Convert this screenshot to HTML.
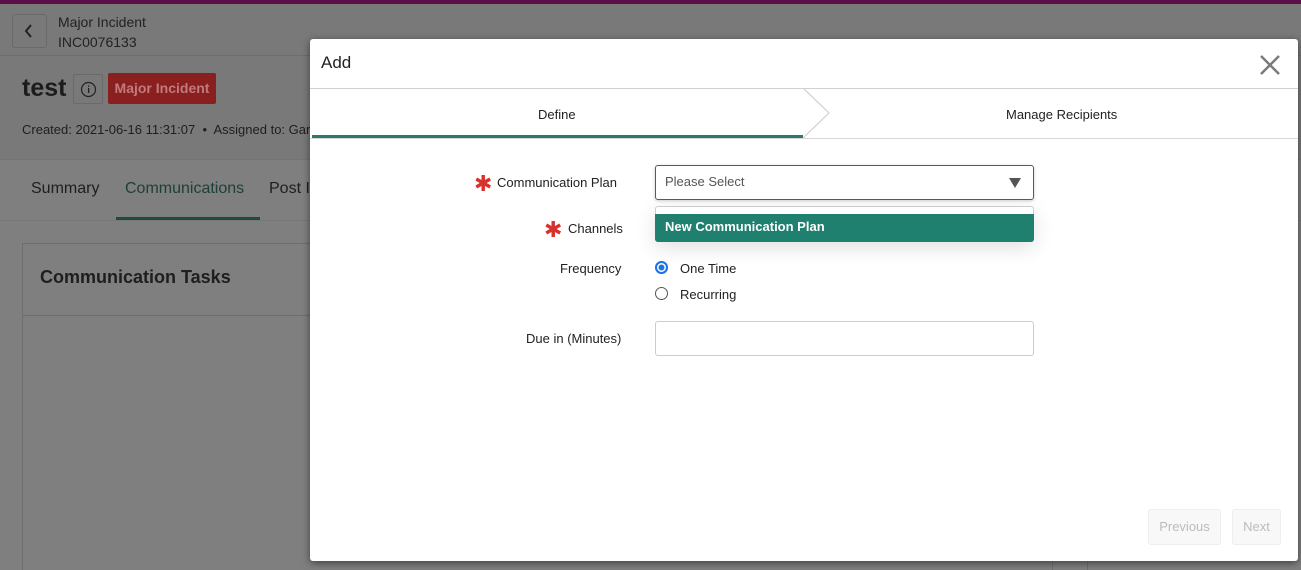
<!DOCTYPE html>
<html style="width:1301px;height:570px;overflow:hidden"><head><meta charset="utf-8"><style>
*{box-sizing:border-box;margin:0;padding:0}
body{width:1301px;height:570px;overflow:hidden;background:#7f7f7f;font-family:"Liberation Sans",sans-serif;position:relative;color:#1a1a1a}
.a{position:absolute}
.ast{font-size:22px;color:#d9312b;font-family:"DejaVu Sans",sans-serif;line-height:22px}
</style></head><body>
<div class="a" style="left:0;top:0;width:1301px;height:4px;background:#5a0f4a"></div>
<div class="a" style="left:0;top:4px;width:1301px;height:155px;background:#797979"></div>
<div class="a" style="left:0;top:55px;width:1301px;height:1px;background:#6e6e6e"></div>
<div class="a" style="left:0;top:159px;width:1301px;height:1px;background:#747474"></div>
<div class="a" style="left:12px;top:14px;width:35px;height:34px;border:1px solid #6a6a6a;border-radius:3px"></div>
<svg class="a" style="left:22px;top:22px" width="14" height="18"><path d="M9 3 L4 9 L9 15" fill="none" stroke="#222" stroke-width="2"/></svg>
<div class="a" style="left:58px;top:12px;font-size:14px;color:#222;line-height:20px">Major Incident<br>INC0076133</div>
<div class="a" style="left:22px;top:74px;font-size:25px;font-weight:bold;color:#1c1c1c">test</div>
<div class="a" style="left:73px;top:74px;width:30px;height:30px;border:1px solid #6a6a6a;border-radius:2px"></div>
<svg class="a" style="left:80px;top:81px" width="17" height="17"><circle cx="8.5" cy="8.5" r="7" fill="none" stroke="#222" stroke-width="1.2"/><rect x="8" y="7" width="1.3" height="5" fill="#222"/><rect x="8" y="4.5" width="1.3" height="1.3" fill="#222"/></svg>
<div class="a" style="left:108px;top:73px;width:108px;height:31px;background:#8a1f1f;border-radius:2px;color:#c27a7a;font-weight:bold;font-size:14px;line-height:31px;text-align:center">Major Incident</div>
<div class="a" style="left:22px;top:122px;font-size:13px;color:#1e1e1e;white-space:nowrap">Created: 2021-06-16 11:31:07 &nbsp;•&nbsp; Assigned to: Gar</div>
<div class="a" style="left:31px;top:180px;font-size:16px;color:#1e1e1e">Summary</div>
<div class="a" style="left:125px;top:180px;font-size:16px;color:#1e3f38">Communications</div>
<div class="a" style="left:269px;top:180px;font-size:16px;color:#1e1e1e">Post I</div>
<div class="a" style="left:116px;top:217px;width:144px;height:4px;background:#1f4a42"></div>
<div class="a" style="left:0;top:220px;width:1301px;height:1px;background:#777"></div>
<div class="a" style="left:22px;top:243px;width:1031px;height:327px;border:1px solid #6e6e6e;border-bottom:none"></div>
<div class="a" style="left:22px;top:315px;width:1031px;height:1px;background:#6e6e6e"></div>
<div class="a" style="left:1087px;top:243px;width:1px;height:327px;background:#6e6e6e"></div>
<div class="a" style="left:40px;top:267px;font-size:18px;font-weight:bold;color:#1e1e1e">Communication Tasks</div>

<div class="a" style="left:310px;top:39px;width:988px;height:522px;background:#fff;border-radius:3px;box-shadow:0 2px 8px rgba(0,0,0,.5)">
 <div class="a" style="left:11px;top:14px;font-size:17px;color:#222">Add</div>
 <svg class="a" style="left:949px;top:15px" width="22" height="22"><path d="M2 2 L20 20 M20 2 L2 20" stroke="#7a7a7a" stroke-width="2.5"/></svg>
 <div class="a" style="left:0;top:49px;width:988px;height:1px;background:#d0d0d0"></div>
 <div class="a" style="left:0;top:99px;width:988px;height:1px;background:#d6d6d6"></div>
 <div class="a" style="left:2px;top:96px;width:492px;height:3px;background:#2a7a6c"></div>
 <svg class="a" style="left:490px;top:49px" width="32" height="51"><path d="M3 0 L29 25 L3 50" fill="#fff" stroke="#d0d0d0" stroke-width="1.2"/></svg>
 <div class="a" style="left:228px;top:68px;font-size:13px;color:#222">Define</div>
 <div class="a" style="left:696px;top:68px;font-size:13px;color:#222">Manage Recipients</div>

 <div class="a ast" style="left:164px;top:135px">✱</div>
 <div class="a" style="left:187px;top:136px;font-size:13px;color:#222">Communication Plan</div>
 <div class="a" style="left:345px;top:126px;width:379px;height:35px;border:1px solid #2e6f63;border-radius:3px;box-shadow:0 1px 3px rgba(0,0,0,.2)"></div>
 <div class="a" style="left:355px;top:135px;font-size:13px;color:#555">Please Select</div>
 <svg class="a" style="left:699px;top:139px" width="12" height="10"><path d="M0 0 L12 0 L6 10Z" fill="#555"/></svg>
 <div class="a" style="left:345px;top:167px;width:379px;height:36px;border:1px solid #ccc;border-radius:3px;background:#fff;box-shadow:0 6px 20px rgba(0,0,0,.12)"></div>
 <div class="a" style="left:345px;top:175px;width:379px;height:28px;background:#1f8070;border-radius:0 0 3px 3px"></div>
 <div class="a" style="left:355px;top:180px;font-size:13px;font-weight:bold;color:#fff">New Communication Plan</div>

 <div class="a ast" style="left:234px;top:181px">✱</div>
 <div class="a" style="left:258px;top:182px;font-size:13px;color:#222">Channels</div>
 <div class="a" style="left:250px;top:222px;font-size:13px;color:#222">Frequency</div>
 <div class="a" style="left:345px;top:222px;width:13px;height:13px;border-radius:50%;background:#1a73e8;box-shadow:inset 0 0 0 2px #1a73e8,inset 0 0 0 3.5px #fff"></div>
 <div class="a" style="left:370px;top:222px;font-size:13px;color:#222">One Time</div>
 <div class="a" style="left:345px;top:248px;width:13px;height:13px;border-radius:50%;border:1px solid #555"></div>
 <div class="a" style="left:370px;top:248px;font-size:13px;color:#222">Recurring</div>
 <div class="a" style="left:216px;top:292px;font-size:13px;color:#222">Due in (Minutes)</div>
 <div class="a" style="left:345px;top:282px;width:379px;height:35px;border:1px solid #ccc;border-radius:3px"></div>

 <div class="a" style="left:838px;top:470px;width:73px;height:36px;border:1px solid #eee;background:#f8f8f8;border-radius:3px;font-size:13px;color:#bbb;text-align:center;line-height:34px">Previous</div>
 <div class="a" style="left:922px;top:470px;width:49px;height:36px;border:1px solid #eee;background:#f8f8f8;border-radius:3px;font-size:13px;color:#bbb;text-align:center;line-height:34px">Next</div>
</div>
</body></html>
